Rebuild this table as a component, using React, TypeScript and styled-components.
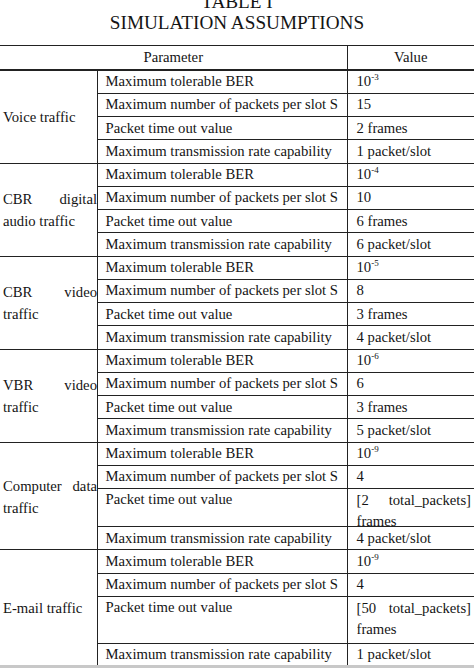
import React from 'react'
import styled, { createGlobalStyle } from 'styled-components'

const GlobalStyle = createGlobalStyle`
  html, body {
    margin: 0;
    padding: 0;
    background: #ffffff;
    overflow: hidden;
  }
  body {
    font-family: "Liberation Serif", "Times New Roman", serif;
    color: #141414;
  }
`

const Page = styled.div`
  width: 474px;
  height: 668px;
  overflow: hidden;
  background: #fff;
  border-bottom: 3px solid #c8c8c8;
  box-sizing: border-box;
`

const Caption = styled.div`
  margin-top: -9px;
  text-align: center;
  font-size: 19.2px;
  line-height: 21px;
`

const Table = styled.table`
  margin-top: 12px;
  width: 474px;
  border-collapse: collapse;
  table-layout: fixed;
  font-size: 14.7px;
  line-height: 21px;
`

const HeadCell = styled.th<{ $last?: boolean }>`
  height: 23px;
  padding: 0;
  font-weight: normal;
  text-align: center;
  border-top: 1px solid #222;
  border-bottom: 2px solid #222;
  border-right: ${p => (p.$last ? 'none' : '1px solid #222')};
`

const GroupCell = styled.td`
  padding: 0 0 0 3px;
  vertical-align: middle;
  border-bottom: 1px solid #222;
  border-right: 1px solid #222;
  line-height: 22px;
`

const GroupLabel = styled.div<{ $shift?: number }>`
  width: 94px;
  text-align: justify;
  text-align-last: left;
  margin-top: ${p => p.$shift || 0}px;
`

const ParamCell = styled.td<{ $tall?: boolean }>`
  padding: 0 0 0 8px;
  vertical-align: ${p => (p.$tall ? 'top' : 'middle')};
  border: 1px solid #222;
  white-space: nowrap;
`

const ValueCell = styled.td<{ $tall?: boolean }>`
  padding: 0 3px 0 9px;
  vertical-align: ${p => (p.$tall ? 'top' : 'middle')};
  border-top: 1px solid #222;
  border-bottom: 1px solid #222;
`

const Row = styled.tr<{ $h: number }>`
  height: ${p => p.$h}px;
`

const Clip = styled.div<{ $h: number }>`
  height: ${p => p.$h}px;
  overflow: hidden;
  padding-top: 1px;
`

const Justified = styled.div`
  text-align: justify;
  text-align-last: left;
`

const Sup = styled.sup`
  font-size: 9px;
  vertical-align: 6px;
  line-height: 0;
`

type Item = { param: string; value: React.ReactNode; tall?: number }
type Group = { label: React.ReactNode; shift?: number; items: Item[] }

const pow = (e: string) => (
  <>
    10<Sup>{e}</Sup>
  </>
)

const stdItems = (ber: string, s: string, timeout: string, rate: string): Item[] => [
  { param: 'Maximum tolerable BER', value: pow(ber) },
  { param: 'Maximum number of packets per slot S', value: s },
  { param: 'Packet time out value', value: timeout },
  { param: 'Maximum transmission rate capability', value: rate },
]

const groups: Group[] = [
  { label: 'Voice traffic', items: stdItems('-3', '15', '2 frames', '1 packet/slot') },
  { label: 'CBR digital audio traffic', items: stdItems('-4', '10', '6 frames', '6 packet/slot') },
  { label: 'CBR video traffic', items: stdItems('-5', '8', '3 frames', '4 packet/slot') },
  { label: 'VBR video traffic', items: stdItems('-6', '6', '3 frames', '5 packet/slot') },
  {
    label: 'Computer data traffic',
    shift: 2,
    items: [
      { param: 'Maximum tolerable BER', value: pow('-9') },
      { param: 'Maximum number of packets per slot S', value: '4' },
      { param: 'Packet time out value', value: '[2 total_packets] frames', tall: 37 },
      { param: 'Maximum transmission rate capability', value: '4 packet/slot' },
    ],
  },
  {
    label: 'E-mail traffic',
    items: [
      { param: 'Maximum tolerable BER', value: pow('-9') },
      { param: 'Maximum number of packets per slot S', value: '4' },
      { param: 'Packet time out value', value: '[50 total_packets] frames', tall: 46 },
      { param: 'Maximum transmission rate capability', value: '1 packet/slot' },
    ],
  },
]

export default function App() {
  return (
    <Page>
      <GlobalStyle />
      <Caption>
        TABLE I
        <br />
        SIMULATION ASSUMPTIONS
      </Caption>
      <Table>
        <colgroup>
          <col style={{ width: 97 }} />
          <col style={{ width: 250 }} />
          <col style={{ width: 127 }} />
        </colgroup>
        <thead>
          <tr>
            <HeadCell colSpan={2}>Parameter</HeadCell>
            <HeadCell $last>Value</HeadCell>
          </tr>
        </thead>
        <tbody>
          {groups.map((g, gi) =>
            g.items.map((it, i) => (
              <Row key={`${gi}-${i}`} $h={it.tall || 23.25}>
                {i === 0 && (
                  <GroupCell rowSpan={g.items.length}>
                    <GroupLabel $shift={g.shift}>{g.label}</GroupLabel>
                  </GroupCell>
                )}
                <ParamCell $tall={!!it.tall}>{it.param}</ParamCell>
                <ValueCell $tall={!!it.tall}>
                  {it.tall ? (
                    <Clip $h={it.tall - 1}>
                      <Justified>{it.value}</Justified>
                    </Clip>
                  ) : (
                    it.value
                  )}
                </ValueCell>
              </Row>
            ))
          )}
        </tbody>
      </Table>
    </Page>
  )
}
